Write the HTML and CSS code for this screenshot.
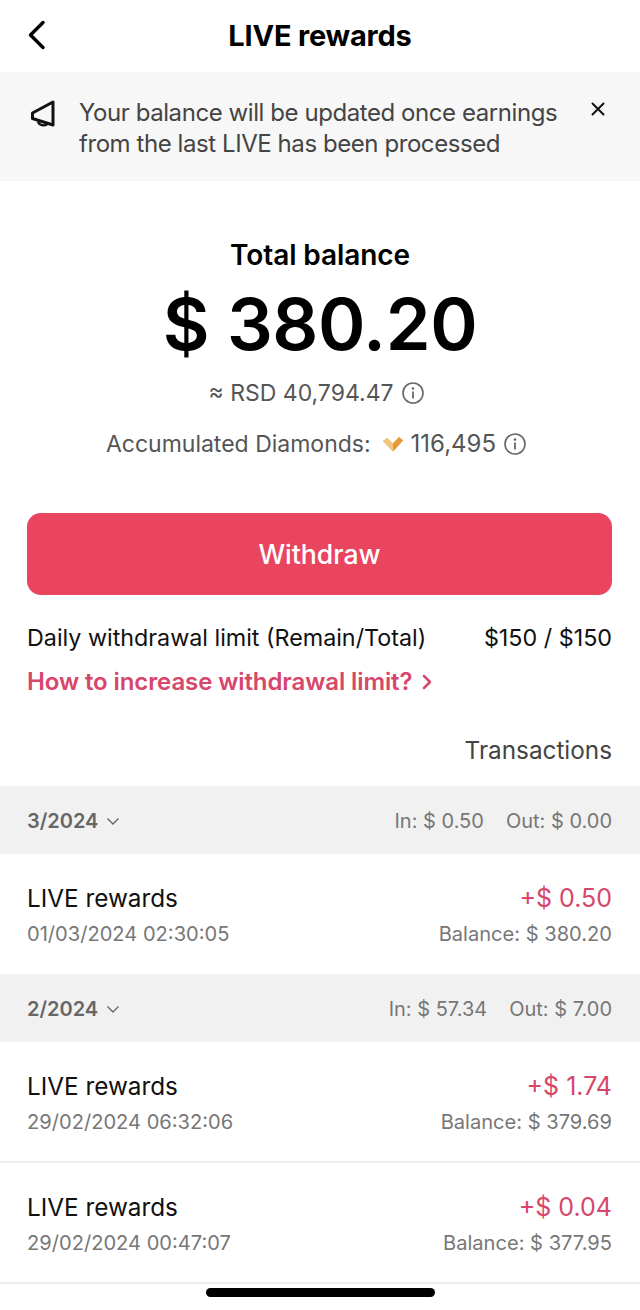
FILE: index.html
```html
<!DOCTYPE html>
<html lang="en">
<head>
<meta charset="utf-8">
<title>LIVE rewards</title>
<link rel="stylesheet" href="styles.css">
</head>
<body>
<div class="page">
  <header class="nav">
    <svg class="back" width="20" height="30" viewBox="0 0 20 30"><path d="M17 2.500 4.500 15 17 27.500" fill="none" stroke="#000" stroke-width="3.400" stroke-linecap="round" stroke-linejoin="round"/></svg>
    <h1 class="nav-title">LIVE rewards</h1>
  </header>
  <section class="notice">
    <svg class="horn" width="26" height="30" viewBox="0 0 26 30"><path d="M24 3 3.500 14V19.500L24 26Z" fill="none" stroke="#111" stroke-width="3" stroke-linejoin="round"/><path d="M9 22.500c1 4 6 5 9.500 2.500" fill="none" stroke="#111" stroke-width="2.200"/></svg>
    <p class="notice-text">Your balance will be updated once earnings<br>from the last LIVE has been processed</p>
    <svg class="close" width="14" height="14" viewBox="0 0 14 14"><path d="M1.500 1.500l11 11M12.500 1.500l-11 11" fill="none" stroke="#111" stroke-width="2" stroke-linecap="round"/></svg>
  </section>
  <section class="balance">
    <h2 class="balance-label">Total balance</h2>
    <div class="balance-value">$ 380.20</div>
    <div class="sub-line">
      <span>≈ RSD 40,794.47</span>
      <svg class="info" width="22" height="22" viewBox="0 0 22 22"><circle cx="11" cy="11" r="10" fill="none" stroke="#666" stroke-width="1.600"/><circle cx="11" cy="6.500" r="1.300" fill="#666"/><path d="M11 9.500v7" stroke="#666" stroke-width="1.800"/></svg>
    </div>
    <div class="sub-line sub-line-diamonds">
      <span>Accumulated Diamonds:</span>
      <svg class="diamond" width="22" height="16" viewBox="0 0 22 16"><path d="M1 5 5 2l6 5.500L17 1l4 3.500L11 15.500Z" fill="#eda94a"/><path d="M1 5 5 2l6 5.500v8Z" fill="#f4c57c"/><path d="M11 7.500 17 1l4 3.500L11 15.500Z" fill="#e39a3e"/></svg>
      <span class="diamond-count">116,495</span>
      <svg class="info" width="22" height="22" viewBox="0 0 22 22"><circle cx="11" cy="11" r="10" fill="none" stroke="#666" stroke-width="1.600"/><circle cx="11" cy="6.500" r="1.300" fill="#666"/><path d="M11 9.500v7" stroke="#666" stroke-width="1.800"/></svg>
    </div>
  </section>
  <section class="actions">
    <button class="withdraw" type="button">Withdraw</button>
    <div class="limit"><span>Daily withdrawal limit (Remain/Total)</span><span>$150 / $150</span></div>
    <a class="limit-link" href="#">How to increase withdrawal limit?
      <svg width="10" height="16" viewBox="0 0 10 16"><path d="M2 2l6 6-6 6" fill="none" stroke="#d7466b" stroke-width="2.500" stroke-linecap="round" stroke-linejoin="round"/></svg>
    </a>
    <div class="tx-link">Transactions</div>
  </section>

  <div class="month">
    <div class="month-name">3/2024 <svg width="14" height="9" viewBox="0 0 14 9"><path d="M1.500 1.500 7 7l5.500-5.500" fill="none" stroke="#666" stroke-width="1.400"/></svg></div>
    <div class="month-sum"><span>In: $ 0.50</span><span>Out: $ 0.00</span></div>
  </div>
  <div class="row">
    <div class="row-line"><span class="row-title">LIVE rewards</span><span class="row-amount">+$ 0.50</span></div>
    <div class="row-line row-meta"><span>01/03/2024 02:30:05</span><span>Balance: $ 380.20</span></div>
  </div>
  <div class="month">
    <div class="month-name">2/2024 <svg width="14" height="9" viewBox="0 0 14 9"><path d="M1.500 1.500 7 7l5.500-5.500" fill="none" stroke="#666" stroke-width="1.400"/></svg></div>
    <div class="month-sum"><span>In: $ 57.34</span><span>Out: $ 7.00</span></div>
  </div>
  <div class="row row-bordered">
    <div class="row-line"><span class="row-title">LIVE rewards</span><span class="row-amount">+$ 1.74</span></div>
    <div class="row-line row-meta"><span>29/02/2024 06:32:06</span><span>Balance: $ 379.69</span></div>
  </div>
  <div class="row row-bordered">
    <div class="row-line"><span class="row-title">LIVE rewards</span><span class="row-amount">+$ 0.04</span></div>
    <div class="row-line row-meta"><span>29/02/2024 00:47:07</span><span>Balance: $ 377.95</span></div>
  </div>
  <div class="home-bar"></div>
</div>
</body>
</html>
```
FILE: styles.css
```css
* { box-sizing: border-box; margin: 0; padding: 0; }
html, body { background: #fff; }
body { font-family: Inter, "Liberation Sans", sans-serif; color: #111; }
.page { width: 640px; height: 1310px; overflow: hidden; position: relative; }

.nav { height: 72px; display: flex; align-items: center; justify-content: center; position: relative; }
.back { position: absolute; left: 26px; top: 20px; }
.nav-title { font-size: 29px; font-weight: 700; color: #000; letter-spacing: -0.2px; margin-top: -1px; }

.notice { height: 109px; background: #f7f7f7; display: flex; align-items: flex-start; padding: 25px 0 0 29px; }
.horn { margin: 2px 0 0 0; flex: none; }
.notice-text { font-size: 24px; line-height: 31px; color: #444; margin-left: 24px; width: 501px; white-space: nowrap; letter-spacing: -0.43px; }
.close { flex: none; margin: 5px 0 0 11px; }

.balance { height: 332px; padding-top: 56px; text-align: center; }
.balance-label { font-size: 28px; font-weight: 600; line-height: 36px; color: #000; letter-spacing: -0.1px; }
.balance-value { font-size: 72px; font-weight: 600; line-height: 88px; color: #000; margin-top: 7px; letter-spacing: -0.4px; }
.sub-line { display: flex; justify-content: center; align-items: center; gap: 8px; font-size: 23px; line-height: 32px; color: #555; margin-top: 9px; padding-right: 8px; }
.sub-line-diamonds { margin-top: 19px; }
.diamond { margin: 0 0 0 3px; }
.diamond-count { font-size: 24px; margin-left: -1px; }

.actions { padding: 0 28px 0 27px; height: 273px; }
.withdraw { display: block; width: 585px; height: 82px; border: 0; border-radius: 14px; background: #ea455f; color: #fff; font: 500 26.6px Inter, sans-serif; }
.limit { display: flex; justify-content: space-between; font-size: 23.3px; line-height: 30px; color: #111; margin-top: 28px; width: 585px; }
.limit-link { display: flex; align-items: center; gap: 10px; font-size: 24px; line-height: 30px; font-weight: 600; color: #d7466b; text-decoration: none; margin-top: 14px; letter-spacing: -0.1px; }
.tx-link { font-size: 24.3px; line-height: 32px; color: #444; text-align: right; width: 585px; margin-top: 37px; }

.month { height: 68px; background: #f1f1f1; display: flex; justify-content: space-between; align-items: center; padding: 2px 28px 0 27px; }
.month-name { font-size: 20px; font-weight: 600; color: #666; display: flex; align-items: center; gap: 8px; }
.month-sum { display: flex; gap: 22px; font-size: 20px; color: #777; }

.row { height: 120px; padding-top: 27px; }
.row-bordered { height: 121px; border-bottom: 2px solid #eee; }
.row-line { display: flex; justify-content: space-between; align-items: center; padding: 0 28px 0 27px; height: 34px; }
.row-title { font-size: 24.3px; color: #111; }
.row-amount { font-size: 25px; color: #d7466b; }
.row-meta { font-size: 20.100px; color: #777; margin-top: 2px; }

.home-bar { position: absolute; left: 206px; top: 1288px; width: 229px; height: 9px; border-radius: 5px; background: #000; }
```
